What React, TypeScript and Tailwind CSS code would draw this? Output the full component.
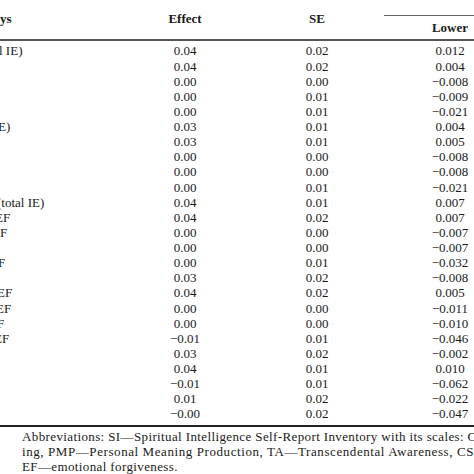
import React from "react";

type Row = [string, number, string, string, string];

const rows: Row[] = [
  ["l IE)", -1, "0.04", "0.02", "0.012"],
  ["", 0, "0.04", "0.02", "0.004"],
  ["", 0, "0.00", "0.00", "−0.008"],
  ["", 0, "0.00", "0.01", "−0.009"],
  ["", 0, "0.00", "0.01", "−0.021"],
  ["E)", -2, "0.03", "0.01", "0.004"],
  ["", 0, "0.03", "0.01", "0.005"],
  ["", 0, "0.00", "0.00", "−0.008"],
  ["", 0, "0.00", "0.00", "−0.008"],
  ["", 0, "0.00", "0.01", "−0.021"],
  ["(total IE)", -3, "0.04", "0.01", "0.007"],
  ["EF", -5, "0.04", "0.02", "0.007"],
  ["EF", -8, "0.00", "0.00", "−0.007"],
  ["", 0, "0.00", "0.00", "−0.007"],
  ["EF", -10, "0.00", "0.01", "−0.032"],
  ["", 0, "0.03", "0.02", "−0.008"],
  ["EF", -3, "0.04", "0.02", "0.005"],
  ["EF", -4, "0.00", "0.00", "−0.011"],
  ["EF", -11, "0.00", "0.00", "−0.010"],
  ["EF", -6, "−0.01", "0.01", "−0.046"],
  ["", 0, "0.03", "0.02", "−0.002"],
  ["", 0, "0.04", "0.01", "0.010"],
  ["", 0, "−0.01", "0.01", "−0.062"],
  ["", 0, "0.01", "0.02", "−0.022"],
  ["", 0, "−0.00", "0.02", "−0.047"],
];

const cols = "grid grid-cols-[150px_70px_62px_70px_74px_48px]";

export default function App() {
  return (
    <div
      className="w-[474px] h-[474px] overflow-hidden bg-white text-[#1a1a1a] text-[13px]"
      style={{ fontFamily: '"Liberation Serif", "Times New Roman", serif' }}
    >
      {/* header */}
      <div className={`${cols} h-[39px] leading-[15px]`}>
        <div className="pt-[11px] font-bold whitespace-nowrap overflow-hidden">ys</div>
        <div className="pt-[11px] text-center font-bold">Effect</div>
        <div />
        <div className="pt-[11px] text-center font-bold">SE</div>
        <div className="col-span-2 pt-[15px]">
          <div className="ml-[32px] h-px bg-[#666]" />
          <div className="grid grid-cols-[74px_48px] pt-[4px]">
            <div />
            <div className="text-center font-bold">Lower</div>
          </div>
        </div>
      </div>
      <div className="h-[1.5px] bg-[#555]" />
      {/* body */}
      <div className="flex flex-col pt-[2.9px] pb-[3.8px]">
        {rows.map((r, i) => (
          <div key={i} className={`${cols} h-[15.125px] items-center leading-[15px]`}>
            <div className="overflow-hidden whitespace-nowrap">
              {r[0] && <span className="inline-block" style={{ marginLeft: r[1] }}>{r[0]}</span>}
            </div>
            <div className="text-center">{r[2]}</div>
            <div />
            <div className="text-center">{r[3]}</div>
            <div />
            <div className="text-center whitespace-nowrap">{r[4]}</div>
          </div>
        ))}
      </div>
      <div className="h-[2px] bg-[#222]" />
      {/* footnote */}
      <div className="pt-[1.2px] pl-[22px] leading-[15px] whitespace-nowrap overflow-hidden">
        <div className="tracking-[0.38px]">Abbreviations: SI—Spiritual Intelligence Self-Report Inventory with its scales: CET—Critical Existential Think-</div>
        <div className="tracking-[0.58px]">ing, PMP—Personal Meaning Production, TA—Transcendental Awareness, CSE—Conscious State Expansion,</div>
        <div className="tracking-[0.38px]">EF—emotional forgiveness.</div>
      </div>
    </div>
  );
}
